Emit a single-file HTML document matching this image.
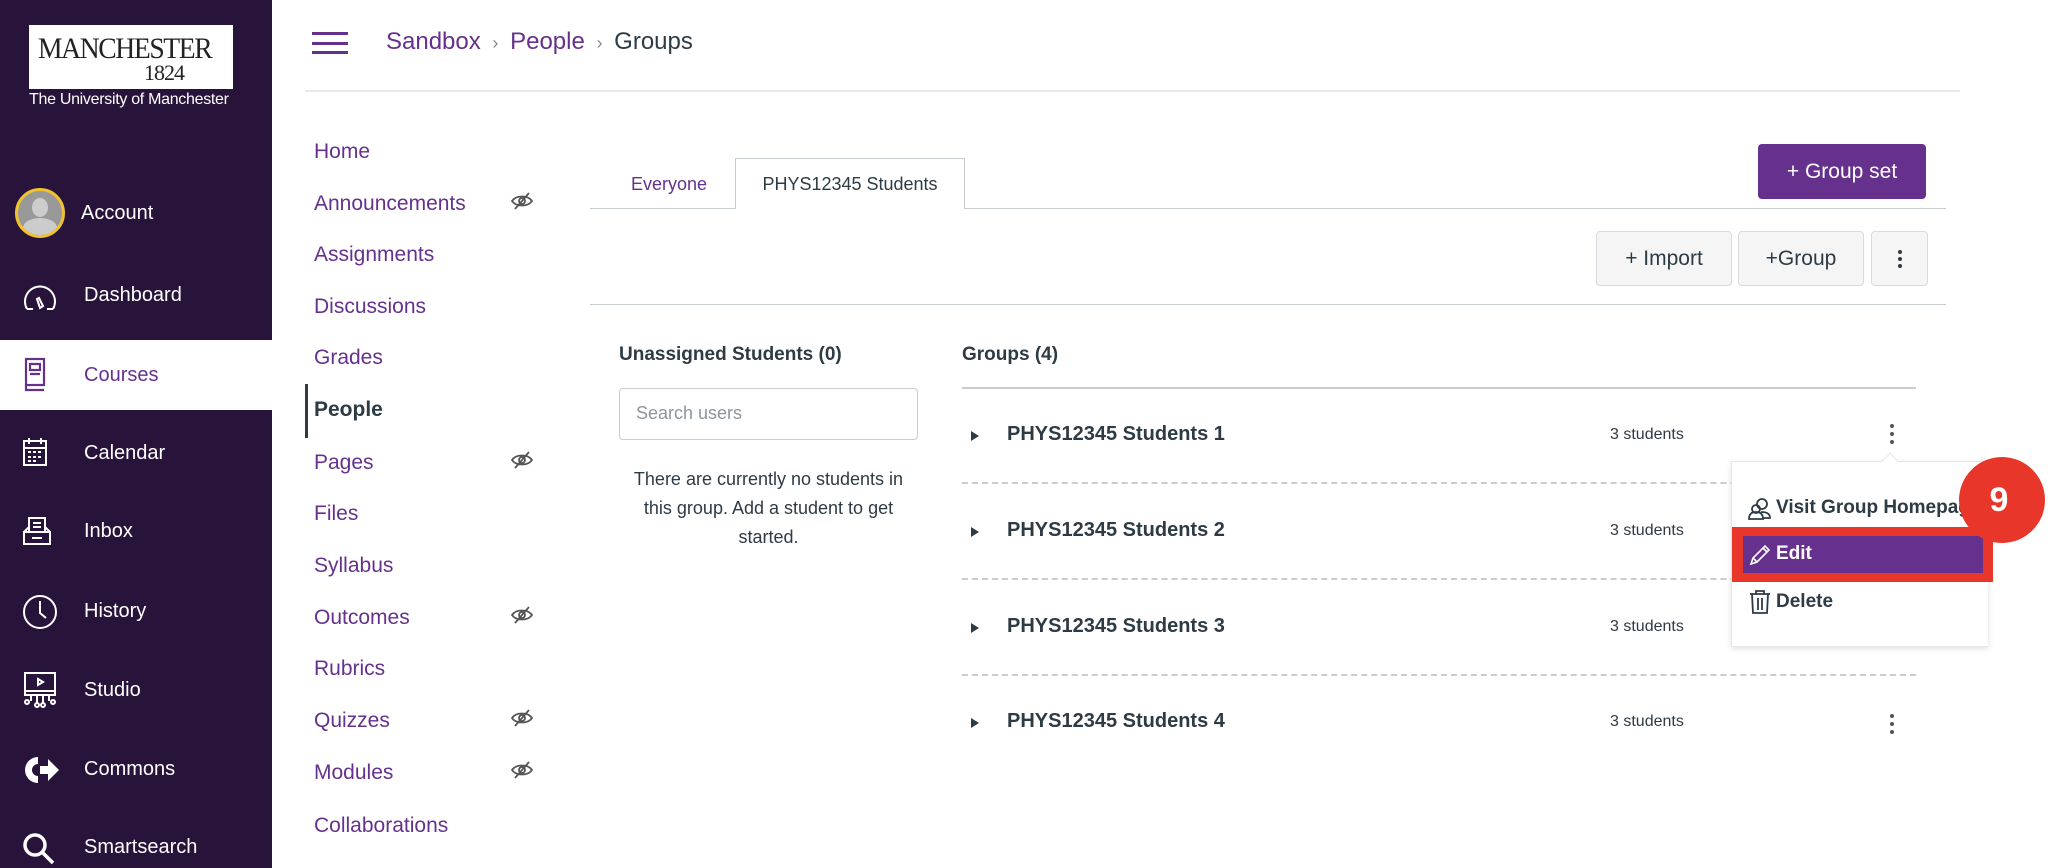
<!DOCTYPE html>
<html><head><meta charset="utf-8"><style>
*{margin:0;padding:0;box-sizing:border-box}
body{width:2048px;height:868px;overflow:hidden;background:#fff;font-family:"Liberation Sans",sans-serif;position:relative;color:#2d3b45}
.a{position:absolute;white-space:nowrap}
#sb{position:absolute;left:0;top:0;width:272px;height:868px;background:#28143a}
.sbi{position:absolute;left:84px;color:#fff;font-size:20px}
.ico{position:absolute;left:22px}
.cn{position:absolute;left:314px;font-size:21px;color:#66318c}
.eye{position:absolute;left:510px}
.btn{position:absolute;background:#f5f5f5;border:1px solid #d7dade;border-radius:4px;font-size:21px;color:#2d3b45;display:flex;align-items:center;justify-content:center}
.row{position:absolute;left:962px;width:954px;border-top:2px dashed #c7cdd1}
.gn{position:absolute;left:1007px;font-size:20px;font-weight:bold;color:#2d3b45}
.st{position:absolute;left:1610px;font-size:16px;color:#2d3b45}
.tri{position:absolute;left:971px;width:0;height:0;border-left:8px solid #2d3b45;border-top:5px solid transparent;border-bottom:5px solid transparent}
.keb{position:absolute;left:1890px;width:4px}
.keb i{display:block;width:4px;height:4px;border-radius:50%;background:#555;margin-bottom:4px}
</style></head><body>
<div id="sb">
 <div class="a" style="left:29px;top:25px;width:204px;height:64px;background:#fff"></div>
 <div class="a" style="left:38px;top:32px;font-family:'Liberation Serif',serif;font-size:30px;color:#222;letter-spacing:-1.5px;transform:scaleX(0.92);transform-origin:left">MANCHESTER</div>
 <div class="a" style="left:144px;top:60px;font-family:'Liberation Serif',serif;font-size:22px;color:#222;letter-spacing:-1px">1824</div>
 <div class="a" style="left:29px;top:91px;font-size:16px;color:#fff;letter-spacing:-0.3px">The University of Manchester</div>
 <div class="a" style="left:15px;top:188px;width:50px;height:50px;border:3px solid #f0c230;border-radius:50%;background:#999;overflow:hidden"><div style="position:absolute;left:14px;top:7px;width:16px;height:19px;border-radius:50%;background:#ccc"></div><div style="position:absolute;left:5px;top:27px;width:34px;height:20px;border-radius:50% 50% 0 0;background:#ccc"></div></div>
 <div class="sbi" style="left:81px;top:202px">Account</div>
 <svg class="ico" style="top:282px" width="36" height="30" viewBox="0 0 36 30" fill="none" stroke="#fff" stroke-width="2"><path d="M5 27A15 15 0 1 1 31 27M5 27h6M25 27h6M15 17l3 9 3-2-4-8z"/></svg>
 <div class="sbi" style="top:284px">Dashboard</div>
 <div class="a" style="left:0;top:340px;width:272px;height:70px;background:#fff"></div>
 <svg class="ico" style="top:357px" width="26" height="36" viewBox="0 0 26 36" fill="none" stroke="#66318c" stroke-width="2.2"><rect x="4" y="2" width="18" height="26"/><rect x="8" y="7" width="10" height="6"/><path d="M8 17h10M4 28v5h18"/></svg>
 <div class="sbi" style="top:364px;color:#66318c">Courses</div>
 <svg class="ico" style="top:437px" width="26" height="30" viewBox="0 0 26 30" fill="none" stroke="#fff" stroke-width="2"><rect x="2" y="4" width="22" height="24"/><path d="M2 11h22M7 1v6M19 1v6M6 15h3M11 15h3M16 15h3M6 20h3M11 20h3M16 20h3M6 24h3M11 24h3"/></svg>
 <div class="sbi" style="top:442px">Calendar</div>
 <svg class="ico" style="top:516px" width="30" height="30" viewBox="0 0 30 30" fill="none" stroke="#fff" stroke-width="2"><path d="M7 2h16v14H7zM11 7h8M11 11h8M2 16h26v12H2zM2 16l5-5M28 16l-5-5M10 22h10"/></svg>
 <div class="sbi" style="top:520px">Inbox</div>
 <svg class="ico" style="top:594px" width="36" height="36" viewBox="0 0 36 36" fill="none" stroke="#fff" stroke-width="2"><circle cx="18" cy="18" r="16"/><path d="M18 7v12l6 5"/></svg>
 <div class="sbi" style="top:600px">History</div>
 <svg class="ico" style="top:671px" width="36" height="38" viewBox="0 0 36 38" fill="none" stroke="#fff" stroke-width="2"><rect x="3" y="2" width="30" height="22"/><path d="M3 20h30M16 8l5 3-5 3zM9 24v6M15 24v8M21 24v8M27 24v6"/><circle cx="5" cy="31" r="2"/><circle cx="15" cy="34" r="2"/><circle cx="21" cy="34" r="2"/><circle cx="31" cy="31" r="2"/></svg>
 <div class="sbi" style="top:679px">Studio</div>
 <svg class="ico" style="top:755px" width="38" height="30" viewBox="0 0 38 30" fill="#fff"><path d="M16 2A13 13 0 1 0 16 28v-7a6 6 0 1 1 0-12z"/><path d="M18 11h8V4l11 11-11 11v-7h-8z"/></svg>
 <div class="sbi" style="top:758px">Commons</div>
 <svg class="ico" style="top:832px" width="34" height="34" viewBox="0 0 34 34" fill="none" stroke="#fff" stroke-width="3.5"><circle cx="13" cy="13" r="10"/><path d="M20 20l11 11"/></svg>
 <div class="sbi" style="top:836px">Smartsearch</div>
</div>

<div class="a" style="left:312px;top:32px;width:36px;height:22px;border-top:3px solid #66318c;border-bottom:3px solid #66318c"><div style="margin-top:7px;height:3px;background:#66318c"></div></div>
<div class="a" style="left:386px;top:28px;font-size:24px;color:#66318c">Sandbox <span style="color:#888;font-size:18px">&nbsp;›&nbsp;</span> People <span style="color:#888;font-size:18px">&nbsp;›&nbsp;</span> <span style="color:#2d3b45">Groups</span></div>
<div class="a" style="left:305px;top:90px;width:1655px;height:2px;background:#e8eaec"></div>

<div class="cn" style="top:140px">Home</div>
<div class="cn" style="top:192px">Announcements</div>
<div class="cn" style="top:243px">Assignments</div>
<div class="cn" style="top:295px">Discussions</div>
<div class="cn" style="top:346px">Grades</div>
<div class="a" style="left:305px;top:384px;width:3px;height:54px;background:#2d3b45"></div>
<div class="cn" style="top:398px;color:#2d3b45;font-weight:bold">People</div>
<div class="cn" style="top:451px">Pages</div>
<div class="cn" style="top:502px">Files</div>
<div class="cn" style="top:554px">Syllabus</div>
<div class="cn" style="top:606px">Outcomes</div>
<div class="cn" style="top:657px">Rubrics</div>
<div class="cn" style="top:709px">Quizzes</div>
<div class="cn" style="top:761px">Modules</div>
<div class="cn" style="top:814px">Collaborations</div>
<svg width="0" height="0"><symbol id="e" viewBox="0 0 24 20"><path d="M2 10c4-6 16-6 20 0c-4 6-16 6-20 0z M5 18L19 2" fill="none" stroke="#555" stroke-width="1.8"/><circle cx="12" cy="10" r="3" fill="none" stroke="#555" stroke-width="1.8"/></symbol></svg>
<svg class="eye" style="top:191px" width="24" height="20"><use href="#e"/></svg>
<svg class="eye" style="top:450px" width="24" height="20"><use href="#e"/></svg>
<svg class="eye" style="top:605px" width="24" height="20"><use href="#e"/></svg>
<svg class="eye" style="top:708px" width="24" height="20"><use href="#e"/></svg>
<svg class="eye" style="top:760px" width="24" height="20"><use href="#e"/></svg>

<div class="a" style="left:590px;top:208px;width:1356px;height:1px;background:#c7cdd1"></div>
<div class="a" style="left:631px;top:174px;font-size:18px;color:#66318c">Everyone</div>
<div class="a" style="left:735px;top:158px;width:230px;height:51px;border:1px solid #c7cdd1;border-bottom:none;background:#fff;font-size:18px;text-align:center;line-height:50px">PHYS12345 Students</div>
<div class="a" style="left:1758px;top:144px;width:168px;height:55px;background:#66318c;border-radius:4px;color:#fff;font-size:21px;text-align:center;line-height:55px">+ Group set</div>
<div class="btn" style="left:1596px;top:231px;width:136px;height:55px">+ Import</div>
<div class="btn" style="left:1738px;top:231px;width:126px;height:55px">+Group</div>
<div class="btn" style="left:1871px;top:231px;width:57px;height:55px"><div style="width:4px"><i style="display:block;width:4px;height:4px;border-radius:50%;background:#2d3b45;margin:3px 0"></i><i style="display:block;width:4px;height:4px;border-radius:50%;background:#2d3b45;margin:3px 0"></i><i style="display:block;width:4px;height:4px;border-radius:50%;background:#2d3b45;margin:3px 0"></i></div></div>
<div class="a" style="left:590px;top:304px;width:1356px;height:1px;background:#c7cdd1"></div>

<div class="a" style="left:619px;top:344px;font-size:19px;font-weight:bold">Unassigned Students (0)</div>
<div class="a" style="left:619px;top:388px;width:299px;height:52px;border:1px solid #c7cdd1;border-radius:4px;font-size:18px;color:#8b969e;padding:14px 16px">Search users</div>
<div class="a" style="left:619px;top:465px;width:299px;text-align:center;font-size:18px;line-height:29px;white-space:normal">There are currently no students in this group. Add a student to get started.</div>

<div class="a" style="left:962px;top:344px;font-size:19px;font-weight:bold">Groups (4)</div>
<div class="a" style="left:962px;top:387px;width:954px;height:2px;background:#c7cdd1"></div>
<div class="tri" style="top:431px"></div><div class="gn" style="top:423px">PHYS12345 Students 1</div><div class="st" style="top:426px">3 students</div>
<div class="keb" style="top:424px"><i></i><i></i><i></i></div>
<div class="row" style="top:482px"></div>
<div class="tri" style="top:527px"></div><div class="gn" style="top:519px">PHYS12345 Students 2</div><div class="st" style="top:522px">3 students</div>
<div class="row" style="top:578px"></div>
<div class="tri" style="top:623px"></div><div class="gn" style="top:615px">PHYS12345 Students 3</div><div class="st" style="top:618px">3 students</div>
<div class="row" style="top:674px"></div>
<div class="tri" style="top:718px"></div><div class="gn" style="top:710px">PHYS12345 Students 4</div><div class="st" style="top:713px">3 students</div>
<div class="keb" style="top:714px"><i></i><i></i><i></i></div>

<div class="a" style="left:1731px;top:461px;width:257px;height:186px;background:#fff;border:1px solid #e4e6e8;border-right:none;box-shadow:0 2px 6px rgba(0,0,0,.12)"></div>
<div class="a" style="left:1884px;top:455px;width:12px;height:12px;background:#fff;border-left:1px solid #e4e6e8;border-top:1px solid #e4e6e8;transform:rotate(45deg)"></div>
<svg class="a" style="left:1748px;top:497px" width="24" height="24" viewBox="0 0 24 24" fill="none" stroke="#2d3b45" stroke-width="1.8"><circle cx="14" cy="7" r="5"/><circle cx="8" cy="12" r="4"/><path d="M1 22c0-6 4-7 7-7s7 1 7 7zM13 15c5 0 9 1 9 6h-7"/></svg>
<div class="a" style="left:1776px;top:497px;font-size:19px;font-weight:bold;width:212px;overflow:hidden">Visit Group Homepage</div>
<div class="a" style="left:1732px;top:527px;width:261px;height:55px;background:#e8362a"></div>
<div class="a" style="left:1743px;top:536px;width:240px;height:37px;background:#66318c"></div>
<svg class="a" style="left:1748px;top:543px" width="24" height="24" viewBox="0 0 24 24" fill="none" stroke="#fff" stroke-width="1.6"><path d="M3 21l2-6L17 3l4 4L9 19zM5 15l4 4M15 5l4 4"/></svg>
<div class="a" style="left:1776px;top:543px;font-size:19px;font-weight:bold;color:#fff">Edit</div>
<svg class="a" style="left:1748px;top:589px" width="24" height="26" viewBox="0 0 24 26" fill="none" stroke="#2d3b45" stroke-width="1.8"><path d="M2 5h20M8 5V2h8v3M4 5l1 19h14l1-19M10 9v12M14 9v12"/></svg>
<div class="a" style="left:1776px;top:591px;font-size:19px;font-weight:bold">Delete</div>
<div class="a" style="left:1959px;top:457px;width:86px;height:86px;border-radius:50%;background:#e8362a;color:#fff;font-size:34px;font-weight:bold;text-align:center;line-height:86px;padding-right:6px">9</div>
</body></html>
